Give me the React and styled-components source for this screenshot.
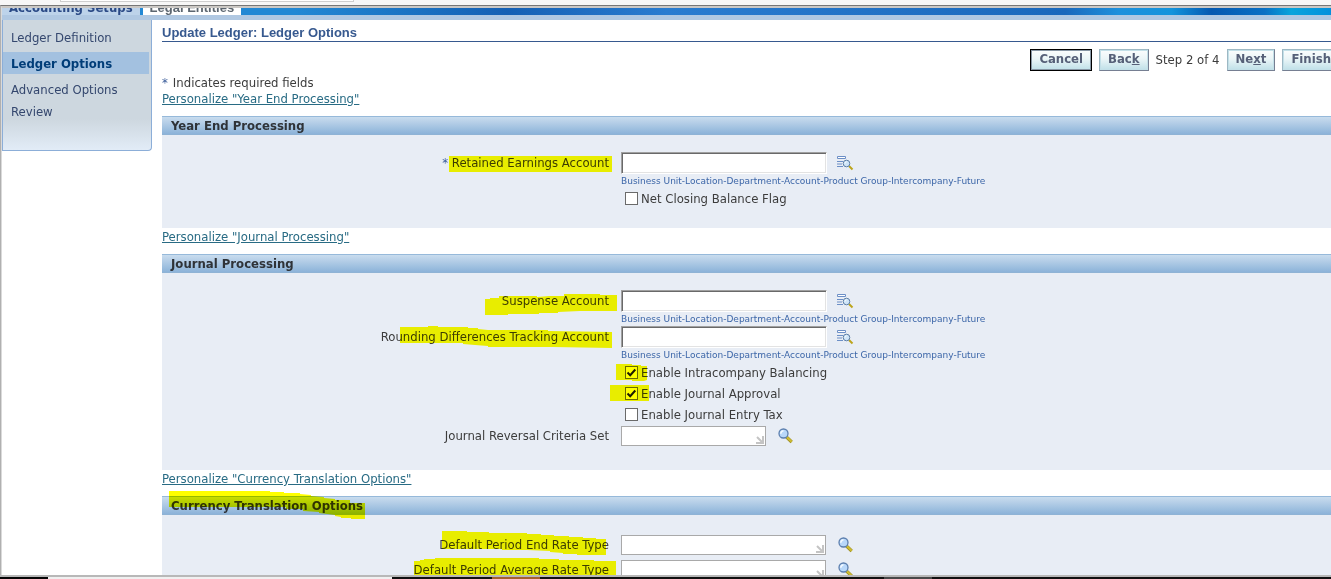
import React from "react";
import styled, { createGlobalStyle, css } from "styled-components";

const sans = `"DejaVu Sans Condensed", "DejaVu Sans", sans-serif`;
const arial = `"Liberation Sans", Arial, sans-serif`;

const GlobalStyle = createGlobalStyle`
  * { box-sizing: border-box; }
  body {
    margin: 0;
    overflow: hidden;
    background: #ffffff;
    color: #3c3c3c;
    font: 13px/16px ${sans};
  }
`;

const Screen = styled.div`
  display: flex;
  flex-direction: column;
  height: 100vh;
`;

const AddressStrip = styled.div`
  flex: none;
  height: 5px;
  padding-left: 60px;
  background: #f7f7f7;
`;

const AddressBox = styled.div`
  width: 294px;
  height: 2px;
  background: #ffffff;
  border: 1px solid #cfcfcf;
  border-top: 0;
`;

const Viewport = styled.div`
  flex: 1;
  min-height: 0;
  overflow: hidden;
  border-top: 1px solid #777777;
  border-left: 1px solid #b0b0b0;
`;

const Page = styled.div`
  height: 100%;
  overflow: hidden;
  border-top: 2px solid #cbc8c4;
  border-left: 1px solid #dadada;
`;

const Taskbar = styled.div`
  flex: none;
  display: flex;
  height: 4px;
  background: #101010;
  border-top: 2px solid #b8b8b8;
`;

const TaskItem = styled.div`
  flex: none;
  width: ${(p) => p.$width}px;
  background: ${(p) => p.$color};
`;

const TabBar = styled.nav`
  display: flex;
  gap: 3px;
  height: 12px;
  border-bottom: 5px solid #b0c8e2;
  background: linear-gradient(
    90deg,
    #2288d4 0,
    #2288d4 22%,
    #1560b4 38%,
    #2a7cd0 50%,
    #1a68bc 80%,
    #1d90dc 84%,
    #1494dc 88%,
    #0458b0 91%,
    #0a70c4 95%,
    #08a4dc 97%,
    #0490dc 100%
  );
`;

const Tab = styled.a`
  display: flex;
  align-items: flex-end;
  height: 7px;
  padding: 0 7px;
  overflow: hidden;
  background: ${(p) => (p.$active ? "#bdd3ea" : "#ffffff")};
  color: ${(p) => (p.$active ? "#2b4a86" : "#5c6670")};
  font: bold 13px/14px ${(p) => (p.$active ? sans : arial)};
  text-decoration: none;
  white-space: nowrap;
`;

const Columns = styled.div`
  display: flex;
  align-items: flex-start;
  gap: 10px;
`;

const Sidebar = styled.nav`
  flex: none;
  display: flex;
  flex-direction: column;
  width: 150px;
  height: 131px;
  padding: 10px 2px 0 0;
  background: linear-gradient(#cdd7df 0, #cdd7df 76%, #e2ecf7 100%);
  border: 1px solid #8caed8;
  border-top: 0;
  border-bottom-right-radius: 4px;
`;

const StepLink = styled.a`
  padding: ${(p) => (p.$current ? "4px 8px 2px" : "0 8px")};
  margin: ${(p) => (p.$current ? "6px 0 8px" : "0 0 6px")};
  color: #34476e;
  line-height: 16px;
  text-decoration: none;

  ${(p) =>
    p.$current &&
    css`
      background: #a3c1e0;
      color: #003d78;
      font-weight: bold;
    `}

  &:first-child {
    margin-bottom: 0;
  }
`;

const Main = styled.main`
  flex: 1;
  min-width: 0;
`;

const Title = styled.h1`
  margin: 0;
  padding: 5px 0 0;
  border-bottom: 1px solid #37598f;
  color: #37598f;
  font: bold 13px/16px ${arial};
`;

const Actions = styled.div`
  display: flex;
  justify-content: flex-end;
  align-items: center;
  gap: 7px;
  height: 22px;
  margin: 7px -9px 4px 0;
`;

const Button = styled.button`
  height: 22px;
  padding: 0 8px 2px;
  background: linear-gradient(#fbfdfd 0, #eaf5f7 45%, #bfe0e8 100%);
  border: 1px solid;
  border-color: ${(p) =>
    p.$primary ? "#000000" : "#9db8c4 #767f92 #767f92 #9db8c4"};
  box-shadow: inset 0 0 0 1px ${(p) => (p.$primary ? "#8796a4" : "#c3e0e8")};
  color: #566078;
  font: bold 13px/16px ${sans};
`;

const Note = styled.div`
  display: flex;
  gap: 5px;
`;

const Required = styled.span`
  color: #3a5c9a;
`;

const PersonalizeLink = styled.a`
  display: table;
  color: #286b84;
  line-height: 16px;
`;

const Section = styled.section`
  margin-bottom: 1px;
`;

const SectionHeader = styled.h2`
  margin: 9px 0 0;
  padding: 1px 9px;
  height: 19px;
  border-top: 1px solid #96b9da;
  border-bottom: 1px solid #8fb3d5;
  background: linear-gradient(#c9dcee, #8cb3d9);
  color: #2f3338;
  font: bold 13px/16px ${sans};
`;

const SectionBody = styled.div`
  padding: ${(p) => p.$top}px 0 ${(p) => p.$bottom}px;
  background: #e8edf5;
`;

const FieldRow = styled.div`
  display: grid;
  grid-template-columns: minmax(0, 447fr) minmax(0, 710fr);
  column-gap: 12px;
  align-items: center;
  min-height: ${(p) => p.$height}px;
`;

const LabelCell = styled.div`
  text-align: right;
  white-space: nowrap;
`;

const Marked = styled.span`
  position: relative;
  display: inline-block;
`;

const Marker = styled.svg`
  position: absolute;
  top: ${(p) => p.$top}px;
  ${(p) => (p.$left === undefined ? `right: ${p.$right}px;` : `left: ${p.$left}px;`)}
  fill: #ffff00;
  mix-blend-mode: multiply;
  pointer-events: none;
`;

const Control = styled.div`
  display: flex;
  align-items: center;
  gap: ${(p) => p.$gap}px;
`;

const AccountInput = styled.input`
  width: 206px;
  height: 22px;
  padding: 1px 4px;
  border: 1px solid;
  border-color: #a0a0a0 #ffffff #ffffff #a0a0a0;
  box-shadow: inset 1px 1px 0 #696969, inset -1px -1px 0 #e3e3e3;
  background: #ffffff;
  font: 13px/16px ${sans};
`;

const LovBox = styled.span`
  position: relative;
  display: flex;
`;

const LovInput = styled.input`
  width: ${(p) => p.$width}px;
  height: 20px;
  padding: 1px 4px;
  border: 1px solid #a9a9a9;
  background: #ffffff;
  font: 13px/16px ${sans};
`;

const LovCorner = styled.svg`
  position: absolute;
  right: 2px;
  bottom: 2px;
`;

const IconButton = styled.button`
  display: flex;
  padding: 0;
  border: 0;
  background: none;
`;

const Hint = styled.div`
  grid-column: 2;
  color: #3c66a8;
  font: 9px/14px "DejaVu Sans", sans-serif;
  white-space: nowrap;
`;

const CheckLabel = styled.label`
  position: relative;
  grid-column: 2;
  display: flex;
  align-items: center;
  gap: 3px;
  padding-left: 4px;
`;

const CheckBox = styled.input`
  appearance: none;
  width: 13px;
  height: 13px;
  margin: 0;
  border: 1px solid #6a6a6a;
  background: #ffffff;
`;

const CheckMark = styled.svg`
  position: absolute;
  left: 4px;
  top: 1px;
  pointer-events: none;
`;

function Highlight({ shape }) {
  return (
    <Marker
      aria-hidden="true"
      width={shape.width}
      height={shape.height}
      $top={shape.top}
      $right={shape.right}
      $left={shape.left}
    >
      <polygon points={shape.points} />
    </Marker>
  );
}

function ListSearchIcon() {
  return (
    <svg width="17" height="15" viewBox="0 0 17 15" fill="none">
      <path d="M.5 .5h8v2h-8z" fill="#fff" stroke="#6c8fc6" />
      <path d="M0 5.500h6M0 8h5M0 10.500h6" stroke="#6c8fc6" />
      <path d="M12 10l3.500 3.500" stroke="#bca41c" strokeWidth="2" />
      <circle cx="9.500" cy="7.500" r="3.300" fill="#cfe5f8" stroke="#5e7fa6" />
      <path d="M8 7.500q.2-1.400 1.500-1.700" stroke="#fff" />
    </svg>
  );
}

function SearchIcon() {
  return (
    <svg width="16" height="16" viewBox="0 0 16 16" fill="none">
      <path d="M8.500 9l5.200 5" stroke="#9c8e22" strokeWidth="3.200" />
      <path d="M8.700 9l5 4.700" stroke="#cfbd32" strokeWidth="2" />
      <circle cx="5.500" cy="5.500" r="4.500" fill="#b9d8fa" stroke="#5c7fae" strokeWidth="1.300" />
      <path d="M2.800 5.700q.2-2.700 2.700-3" stroke="#f2f9ff" strokeWidth="1.600" />
    </svg>
  );
}

function FieldLabel({ id, required, mark, children }) {
  return (
    <LabelCell>
      <Marked>
        <label htmlFor={id}>
          {required && <Required>* </Required>}
          {children}
        </label>
        {mark && <Highlight shape={mark} />}
      </Marked>
    </LabelCell>
  );
}

function AccountField({ id, label, required, mark }) {
  return (
    <FieldRow $height={36}>
      <FieldLabel id={id} required={required} mark={mark}>
        {label}
      </FieldLabel>
      <Control $gap={10}>
        <AccountInput id={id} type="text" />
        <IconButton type="button" aria-label={`Search ${label}`}>
          <ListSearchIcon />
        </IconButton>
      </Control>
      <Hint>
        Business Unit-Location-Department-Account-Product
        Group-Intercompany-Future
      </Hint>
    </FieldRow>
  );
}

function LovField({ id, label, width, height, mark }) {
  return (
    <FieldRow $height={height}>
      <FieldLabel id={id} mark={mark}>
        {label}
      </FieldLabel>
      <Control $gap={12}>
        <LovBox>
          <LovInput id={id} type="text" $width={width} />
          <LovCorner width="8" height="8" viewBox="0 0 8 8" fill="none" stroke="#c4c4c4" strokeWidth="2" aria-hidden="true">
            <path d="M1 1l5 5M7 0v7H0" />
          </LovCorner>
        </LovBox>
        <IconButton type="button" aria-label={`Search ${label}`}>
          <SearchIcon />
        </IconButton>
      </Control>
    </FieldRow>
  );
}

function CheckField({ label, checked, mark }) {
  return (
    <FieldRow $height={21}>
      <CheckLabel>
        <CheckBox type="checkbox" defaultChecked={checked} />
        {checked && (
          <CheckMark width="13" height="13" viewBox="0 0 13 13" fill="none" stroke="#1c1c1c" strokeWidth="2" aria-hidden="true">
            <path d="M2.500 6.500l2.700 2.700L10.300 3.500" />
          </CheckMark>
        )}
        {label}
        {mark && <Highlight shape={mark} />}
      </CheckLabel>
    </FieldRow>
  );
}

const marks = {
  retained: { width: 163, height: 16, top: 1, right: -3, points: "0,0 163,0 163,16 0,16" },
  suspense: {
    width: 132, height: 21, top: 1, right: -8,
    points: "0,5 5,5 5,4 14,4 14,2 52,2 52,3 64,2 79,2 79,0 115,0 115,1 132,1 132,17 95,17 73,18 73,19 54,19 54,20 38,20 23,20 23,21 0,21",
  },
  rounding: {
    width: 212, height: 22, top: -3, right: -3,
    points: "0,1 28,1 28,0 38,0 38,1 68,1 68,2 78,2 78,3 88,4 132,4 148,4 148,5 212,6 212,22 153,21 88,21 88,20 75,19 63,18 63,17 40,17 0,17",
  },
  intracompany: {
    width: 31, height: 17, top: -1, left: -5,
    points: "0,0 16,0 16,1 25,1 25,2 31,2 31,16 28,17 16,17 16,16 0,16",
  },
  approval: { width: 39, height: 16, top: -1, left: -11, points: "0,0 39,0 39,16 0,16" },
  currency: {
    width: 196, height: 28, top: -7, left: -2,
    points: "0,0 101,0 101,1 115,1 115,2 131,2 131,3 142,4 142,5 155,6 155,7 166,8 166,9 181,9 181,12 196,12 196,28 182,28 182,27 172,27 172,26 166,25 166,24 150,22 150,21 134,20 134,18 117,18 117,16 0,16",
  },
  periodEnd: {
    width: 164, height: 24, top: -6, right: 3,
    points: "0,0 25,0 25,1 47,1 47,2 85,2 85,3 99,3 99,4 112,4 112,5 127,5 127,6 141,6 141,7 154,7 154,8 164,8 164,24 135,24 135,23 121,23 121,22 108,21 108,20 85,19 60,19 60,18 0,18",
  },
  periodAverage: {
    width: 202, height: 19, top: -4, right: -7,
    points: "0,3 6,3 6,2 10,2 10,1 21,1 21,0 125,0 125,1 145,1 145,2 180,2 180,3 202,3 202,19 0,19",
  },
};

export default function App() {
  return (
    <Screen>
      <GlobalStyle />
      <AddressStrip>
        <AddressBox />
      </AddressStrip>
      <Viewport>
        <Page>
          <TabBar>
            <Tab href="#setups" $active>Accounting Setups</Tab>
            <Tab href="#entities">Legal Entities</Tab>
          </TabBar>
          <Columns>
            <Sidebar>
              <StepLink href="#definition">Ledger Definition</StepLink>
              <StepLink href="#options" $current>Ledger Options</StepLink>
              <StepLink href="#advanced">Advanced Options</StepLink>
              <StepLink href="#review">Review</StepLink>
            </Sidebar>
            <Main>
              <Title>Update Ledger: Ledger Options</Title>
              <Actions>
                <Button type="button" $primary>Cancel</Button>
                <Button type="button">Bac<u>k</u></Button>
                <span>Step 2 of 4</span>
                <Button type="button">Ne<u>x</u>t</Button>
                <Button type="button">Finish</Button>
              </Actions>
              <Note>
                <Required>*</Required>
                <span>Indicates required fields</span>
              </Note>

              <Section>
                <PersonalizeLink href="#year-end">Personalize "Year End Processing"</PersonalizeLink>
                <SectionHeader>Year End Processing</SectionHeader>
                <SectionBody $top={17} $bottom={19}>
                  <AccountField id="retained" label="Retained Earnings Account" required mark={marks.retained} />
                  <CheckField label="Net Closing Balance Flag" />
                </SectionBody>
              </Section>

              <Section>
                <PersonalizeLink href="#journal">Personalize "Journal Processing"</PersonalizeLink>
                <SectionHeader>Journal Processing</SectionHeader>
                <SectionBody $top={17} $bottom={23}>
                  <AccountField id="suspense" label="Suspense Account" mark={marks.suspense} />
                  <AccountField id="rounding" label="Rounding Differences Tracking Account" mark={marks.rounding} />
                  <CheckField label="Enable Intracompany Balancing" checked mark={marks.intracompany} />
                  <CheckField label="Enable Journal Approval" checked mark={marks.approval} />
                  <CheckField label="Enable Journal Entry Tax" />
                  <LovField id="reversal" label="Journal Reversal Criteria Set" width={145} height={22} />
                </SectionBody>
              </Section>

              <Section>
                <PersonalizeLink href="#currency">Personalize "Currency Translation Options"</PersonalizeLink>
                <SectionHeader>
                  <Marked>
                    Currency Translation Options
                    <Highlight shape={marks.currency} />
                  </Marked>
                </SectionHeader>
                <SectionBody $top={17} $bottom={23}>
                  <LovField id="period-end" label="Default Period End Rate Type" width={205} height={25} mark={marks.periodEnd} />
                  <LovField id="period-average" label="Default Period Average Rate Type" width={205} height={25} mark={marks.periodAverage} />
                </SectionBody>
              </Section>
            </Main>
          </Columns>
        </Page>
      </Viewport>
      <Taskbar>
        <TaskItem $width={48} $color="#050505" />
        <TaskItem $width={344} $color="#f0f0f0" />
        <TaskItem $width={100} $color="#101010" />
        <TaskItem $width={48} $color="#a5602a" />
        <TaskItem $width={344} $color="#101010" />
        <TaskItem $width={48} $color="#484848" />
      </Taskbar>
    </Screen>
  );
}
